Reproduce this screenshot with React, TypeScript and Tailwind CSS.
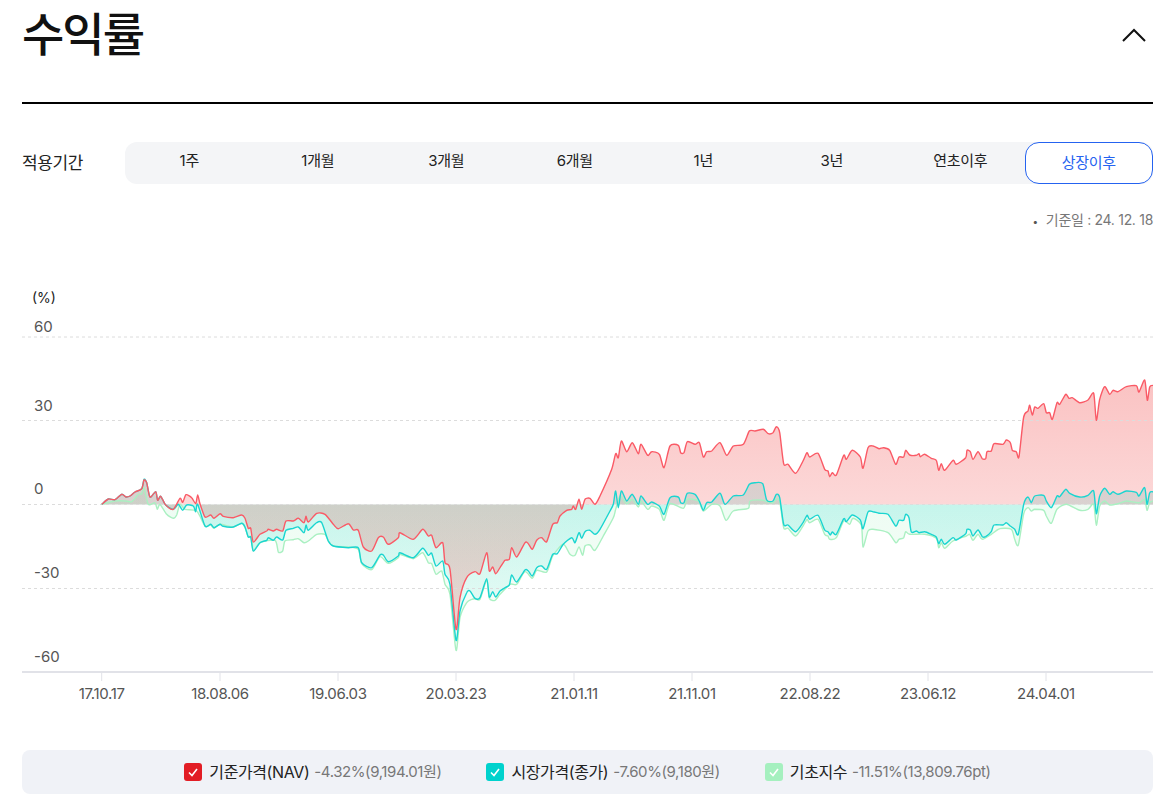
import { Fragment } from 'react';

type Pt = [number, number];

// points were read off 3x crops, so each block keeps the crop origin
const trace = (ox: number, oy: number, pts: Pt[]): Pt[] => pts.map(([x, y]) => [ox + x / 3, oy + y / 3]);

const red: Pt[] = [
  ...trace(0, 440, [[305,190],[325,174],[345,176],[365,160],[378,168],[390,165],[405,153],[425,143],[432,117],[440,125],[450,168],[467,152],[473,178],[482,166],[497,192],[520,205],[540,172],[548,184],[558,161],[575,170],[587,188],[593,162],[600,188],[615,228],[632,222],[642,232],[660,218],[670,226],[700,230],[725,222],[735,232],[745,262],[752,262],[760,303],[780,280],[800,270],[805,265],[820,270],[830,265],[848,270],[858,240],[880,240],[895,232],[912,245],[918,226],[925,243],[950,217],[975,220],[1000,250],[1015,263],[1045,248],[1060,267],[1075,268],[1090,318],[1115,330],[1135,290],[1150,288],[1165,310],[1195,290]]),
  ...trace(400, 420, [[0,335],[40,355],[68,325],[85,345],[95,343],[108,380],[128,365],[135,425],[150,445],[168,625],[180,530],[200,470],[225,452],[240,458],[260,395],[268,450],[278,438],[287,458],[300,440],[315,418],[328,415],[335,380],[350,408],[375,365],[385,368],[397,385],[410,358],[425,350],[440,362],[458,310],[472,305],[480,285],[500,268],[515,265],[520,255],[527,265],[537,235],[545,265],[555,235],[570,232],[585,250],[600,225],[635,145],[647,98],[655,110],[664,60],[680,92],[697,65],[715,98],[723,70],[743,103],[755,92],[778,100],[792,140],[810,75],[835,73],[842,95],[852,95],[862,62],[885,70],[898,65],[910,108],[920,92],[935,90],[960,65],[980,103],[1000,75],[1030,70],[1048,30],[1065,30],[1090,25],[1105,38]]),
  ...trace(773, 360, [[0,215],[10,197],[20,215],[32,308],[45,310],[68,337],[90,300],[102,275],[110,288],[135,277],[155,325],[165,330],[170,347],[178,335],[190,342],[212,283],[220,295],[238,268],[262,288],[270,322],[285,260],[300,255],[318,263],[332,260],[350,268],[368,310],[378,288],[392,288],[398,268],[410,282],[430,283],[438,278],[442,287],[455,280],[475,292],[490,298],[497,328],[505,308],[515,328],[540,298],[550,310],[578,290],[582,268],[592,272],[600,295],[615,272],[628,293],[638,293],[642,272],[655,270],[663,248],[690,250],[700,237],[712,245],[718,268],[730,272],[738,287],[752,168],[765,150],[770,133],[778,162],[785,138],[795,142],[812,128],[820,155],[830,155],[838,175],[852,125],[860,130],[878,100],[888,112],[898,110],[920,125],[945,117],[962,97],[970,178],[980,115],[995,77],[1010,100],[1020,88],[1035,92],[1060,77],[1090,74],[1098,93],[1115,57],[1123,118],[1130,78],[1140,73]]),
];

const teal: Pt[] = [
  ...trace(0, 440, [[305,190],[325,174],[345,176],[365,160],[378,168],[390,165],[405,153],[425,143],[432,115],[440,125],[450,168],[467,152],[473,178],[482,166],[497,192],[520,205],[535,190],[548,208],[560,192],[580,195],[587,212],[593,190],[615,255],[632,250],[642,260],[660,250],[670,256],[700,258],[725,247],[735,258],[745,288],[752,288],[760,330],[780,305],[800,298],[805,290],[820,298],[830,288],[848,297],[858,268],[880,262],[895,258],[912,275],[918,252],[925,268],[950,245],[965,245],[985,300],[1000,315],[1045,320],[1075,320],[1085,365],[1115,380],[1140,342],[1150,342],[1165,362],[1195,345]]),
  ...trace(400, 420, [[0,395],[40,410],[68,382],[85,403],[95,397],[108,435],[128,420],[135,460],[150,490],[168,658],[180,570],[200,515],[210,510],[225,532],[240,530],[260,473],[268,528],[278,512],[287,528],[300,510],[315,500],[328,492],[335,462],[350,483],[375,447],[385,450],[397,465],[410,440],[425,435],[440,445],[458,400],[472,398],[490,370],[515,350],[525,365],[537,335],[545,352],[555,332],[570,328],[585,340],[600,325],[630,270],[640,250],[647,210],[655,260],[664,210],[680,240],[697,220],[715,250],[723,225],[743,250],[755,243],[778,255],[792,280],[810,230],[835,228],[842,245],[852,245],[862,217],[885,220],[898,240],[910,268],[920,245],[935,243],[960,217],[975,250],[1000,225],[1030,222],[1048,190],[1065,185],[1088,188],[1100,237]]),
  ...trace(773, 360, [[0,420],[10,400],[20,410],[32,490],[45,492],[68,512],[90,485],[102,463],[110,475],[135,463],[155,507],[165,512],[172,522],[178,513],[190,520],[212,473],[220,482],[238,462],[262,477],[270,503],[285,453],[300,452],[318,457],[345,460],[368,495],[378,478],[392,478],[398,460],[408,470],[415,513],[430,510],[438,515],[455,512],[475,520],[490,528],[497,548],[505,535],[515,550],[540,530],[550,537],[578,518],[582,505],[592,507],[600,525],[615,507],[628,527],[638,527],[655,512],[663,492],[690,492],[700,485],[712,495],[725,505],[736,520],[752,430],[765,408],[775,425],[785,405],[812,403],[820,420],[835,440],[852,405],[860,407],[878,385],[890,397],[920,408],[945,403],[962,390],[970,458],[980,405],[995,382],[1010,400],[1020,392],[1035,400],[1060,390],[1090,394],[1098,405],[1115,380],[1122,430],[1130,395],[1140,392]]),
];

const green: Pt[] = [
  ...trace(0, 440, [[305,190],[345,180],[378,180],[395,182],[415,160],[425,158],[432,140],[445,190],[465,185],[472,205],[480,190],[500,220],[520,232],[530,222],[540,190],[555,205],[590,210],[615,255],[632,252],[642,262],[660,250],[700,258],[725,247],[735,260],[745,288],[755,290],[760,330],[780,305],[825,298],[835,333],[848,330],[855,300],[880,296],[895,293],[912,305],[925,300],[950,280],[975,280],[985,300],[1000,315],[1045,318],[1075,325],[1085,368],[1115,386],[1140,347],[1165,367],[1195,350]]),
  ...trace(400, 420, [[0,400],[40,413],[68,395],[85,425],[95,428],[108,460],[125,450],[135,490],[150,520],[168,688],[180,590],[200,545],[215,535],[225,533],[240,535],[260,478],[268,532],[285,538],[300,520],[330,490],[350,490],[375,452],[397,472],[410,448],[440,453],[458,405],[490,370],[510,400],[525,403],[537,378],[548,403],[555,375],[570,372],[585,388],[610,345],[640,290],[647,265],[660,225],[680,248],[697,235],[715,258],[723,240],[743,265],[755,255],[778,265],[792,298],[810,248],[850,262],[862,235],[895,240],[910,270],[935,250],[960,255],[978,298],[1000,270],[1045,262],[1050,240],[1085,237],[1100,242]]),
  ...trace(773, 360, [[0,425],[10,415],[20,420],[32,500],[45,502],[68,525],[90,495],[102,475],[110,485],[135,475],[155,520],[165,525],[170,535],[190,530],[212,480],[230,490],[240,472],[265,492],[270,558],[285,510],[300,505],[345,515],[368,545],[378,535],[392,530],[398,512],[410,520],[455,520],[490,532],[497,560],[505,545],[515,562],[540,540],[580,525],[590,520],[600,538],[615,520],[628,535],[655,520],[680,503],[715,505],[725,535],[736,552],[752,458],[765,440],[775,450],[785,445],[812,448],[820,465],[835,487],[852,445],[880,430],[920,448],[945,445],[962,430],[970,493],[980,435],[995,420],[1010,432],[1035,428],[1060,420],[1098,425],[1115,415],[1122,448],[1130,425],[1140,420]]),
];

const ZERO = 503.5;

// catmull-rom through the traced points, the chart lines are curved
const toCurve = (pts: Pt[]) => {
  const n = (v: number) => v.toFixed(1);
  let d = '';
  for (let i = 0; i < pts.length - 1; i++) {
    const p0 = pts[Math.max(i - 1, 0)];
    const p1 = pts[i];
    const p2 = pts[i + 1];
    const p3 = pts[Math.min(i + 2, pts.length - 1)];
    const c1x = p1[0] + (p2[0] - p0[0]) / 8;
    const c1y = p1[1] + (p2[1] - p0[1]) / 8;
    const c2x = p2[0] - (p3[0] - p1[0]) / 8;
    const c2y = p2[1] - (p3[1] - p1[1]) / 8;
    d += `C${n(c1x)} ${n(c1y)} ${n(c2x)} ${n(c2y)} ${n(p2[0])} ${n(p2[1])}`;
  }
  return d;
};

const toLine = (pts: Pt[]) => `M${pts[0][0].toFixed(1)} ${pts[0][1].toFixed(1)}${toCurve(pts)}`;
const toArea = (pts: Pt[]) => `${toLine(pts)}L${pts[pts.length - 1][0].toFixed(1)} ${ZERO}L${pts[0][0].toFixed(1)} ${ZERO}Z`;

const series = [
  { key: 'green', pts: green, fill: 'url(#fillGreen)', stroke: '#aaf0c2' },
  { key: 'teal', pts: teal, fill: 'url(#fillTeal)', stroke: '#1ad5d0' },
  { key: 'red', pts: red, fill: 'url(#fillRed)', stroke: '#fa5a66' },
];

const grid = [336, 419.5, 503.5, 587.5];
const yLabels: [string, number][] = [['60', 331], ['30', 410], ['0', 493], ['-30', 577], ['-60', 661]];
const xLabels: [string, number][] = [
  ['17.10.17', 101.7],
  ['18.08.06', 220],
  ['19.06.03', 338],
  ['20.03.23', 456],
  ['21.01.11', 574],
  ['21.11.01', 692],
  ['22.08.22', 810],
  ['23.06.12', 928],
  ['24.04.01', 1046],
];

const tabs = ['1주', '1개월', '3개월', '6개월', '1년', '3년', '연초이후', '상장이후'];

const legend = [
  { label: '기준가격(NAV)', value: '-4.32%(9,194.01원)', box: 'bg-[#e21d25]' },
  { label: '시장가격(종가)', value: '-7.60%(9,180원)', box: 'bg-[#00d2cd]' },
  { label: '기초지수', value: '-11.51%(13,809.76pt)', box: 'bg-[#a5f0bf]' },
];

function Chart() {
  return (
    <svg viewBox="22 270 1131 440" className="block h-[440px] w-[1131px]">
      <defs>
        <linearGradient id="fillRed" gradientUnits="userSpaceOnUse" x1="0" y1="380" x2="0" y2="503">
          <stop offset="0" stopColor="#f03c3c" stopOpacity="0.31" />
          <stop offset="1" stopColor="#f03c3c" stopOpacity="0.2" />
        </linearGradient>
        <linearGradient id="fillTeal" gradientUnits="userSpaceOnUse" x1="0" y1="503" x2="0" y2="620">
          <stop offset="0" stopColor="#00d2c8" stopOpacity="0.17" />
          <stop offset="1" stopColor="#00d2c8" stopOpacity="0.05" />
        </linearGradient>
        <linearGradient id="fillGreen" gradientUnits="userSpaceOnUse" x1="0" y1="503" x2="0" y2="620">
          <stop offset="0" stopColor="#6ee89a" stopOpacity="0.12" />
          <stop offset="1" stopColor="#6ee89a" stopOpacity="0.07" />
        </linearGradient>
      </defs>

      {series.map((s) => (
        <path key={s.key} d={toArea(s.pts)} fill={s.fill} />
      ))}
      {grid.map((y) => (
        <line key={y} x1="22" x2="1153" y1={y} y2={y} stroke="#dcdcdc" strokeWidth="1" strokeDasharray="3 3" />
      ))}
      {series.map((s) => (
        <path key={s.key} d={toLine(s.pts)} fill="none" stroke={s.stroke} strokeWidth="1.4" strokeLinejoin="round" />
      ))}

      <line x1="22" x2="1153" y1="671" y2="671" stroke="#e1e2e8" strokeWidth="2" />
      {xLabels.map(([label, x]) => (
        <Fragment key={label}>
          <line x1={x} x2={x} y1="671" y2="680" stroke="#e1e2e8" strokeWidth="1" />
          <text x={x} y="698" textAnchor="middle" fontSize="15" letterSpacing="-0.3" fill="#555555">
            {label}
          </text>
        </Fragment>
      ))}

      <text x="32" y="302" fontSize="14" fill="#222222">
        (%)
      </text>
      {yLabels.map(([label, y]) => (
        <text key={label} x="34" y={y} fontSize="15" fill="#555555">
          {label}
        </text>
      ))}
    </svg>
  );
}

export default function App() {
  return (
    <div className="h-[798px] w-[1173px] overflow-hidden bg-white px-[20px] pl-[22px] font-['Inter','Noto_Sans_CJK_KR',sans-serif] text-[#111111]">
      <div className="flex h-[104px] items-start justify-between border-b-2 border-black">
        <h2 className="mt-[2px] text-[46px] leading-[64px] font-medium tracking-[-2px]">수익률</h2>
        <svg viewBox="0 0 24 14" className="mt-[28px] mr-[7px] h-[14px] w-[24px]" fill="none" stroke="#111111" strokeWidth="2">
          <polyline points="1,13 12,2 23,13" />
        </svg>
      </div>

      <div className="mt-[38px] flex items-center">
        <span className="w-[103px] pt-[2px] text-[17px] tracking-[-0.4px] text-[#222222]">적용기간</span>
        <div className="grid h-[42px] flex-1 grid-cols-8 rounded-xl bg-[#f4f5f7]">
          {tabs.map((tab, i) =>
            i === tabs.length - 1 ? (
              <div key={tab} className="flex items-center justify-center rounded-[14px] border border-[#2563f0] bg-white text-[15px] tracking-[-0.3px] text-[#2563f0]">
                {tab}
              </div>
            ) : (
              <div key={tab} className="flex items-center justify-center pb-[3px] text-[15px] tracking-[-0.3px] text-[#222222]">
                {tab}
              </div>
            ),
          )}
        </div>
      </div>

      <p className="mt-[26px] text-right text-[14px] leading-[20px] tracking-[-0.3px] text-[#777777]">
        <span className="mr-[8px] text-[10px] text-[#555555]">•</span>기준일 : 24. 12. 18
      </p>

      <div className="mt-[40px]">
        <Chart />
      </div>

      <div className="mt-[39px] flex h-[44px] items-center justify-center gap-[45px] rounded-lg bg-[#f0f2f7]">
        {legend.map((item) => (
          <div key={item.label} className="flex items-center">
            <span className={`mr-[7px] flex h-[18px] w-[18px] items-center justify-center rounded-[3px] ${item.box}`}>
              <svg viewBox="0 0 12 12" className="h-[12px] w-[12px]" fill="none" stroke="#ffffff" strokeWidth="1.6">
                <polyline points="2,6.5 5,9.5 10,3" />
              </svg>
            </span>
            <span className="text-[16px] tracking-[-0.4px] text-[#222222]">{item.label}</span>
            <span className="ml-[5px] text-[15px] tracking-[-0.4px] text-[#777777]">{item.value}</span>
          </div>
        ))}
      </div>
    </div>
  );
}
